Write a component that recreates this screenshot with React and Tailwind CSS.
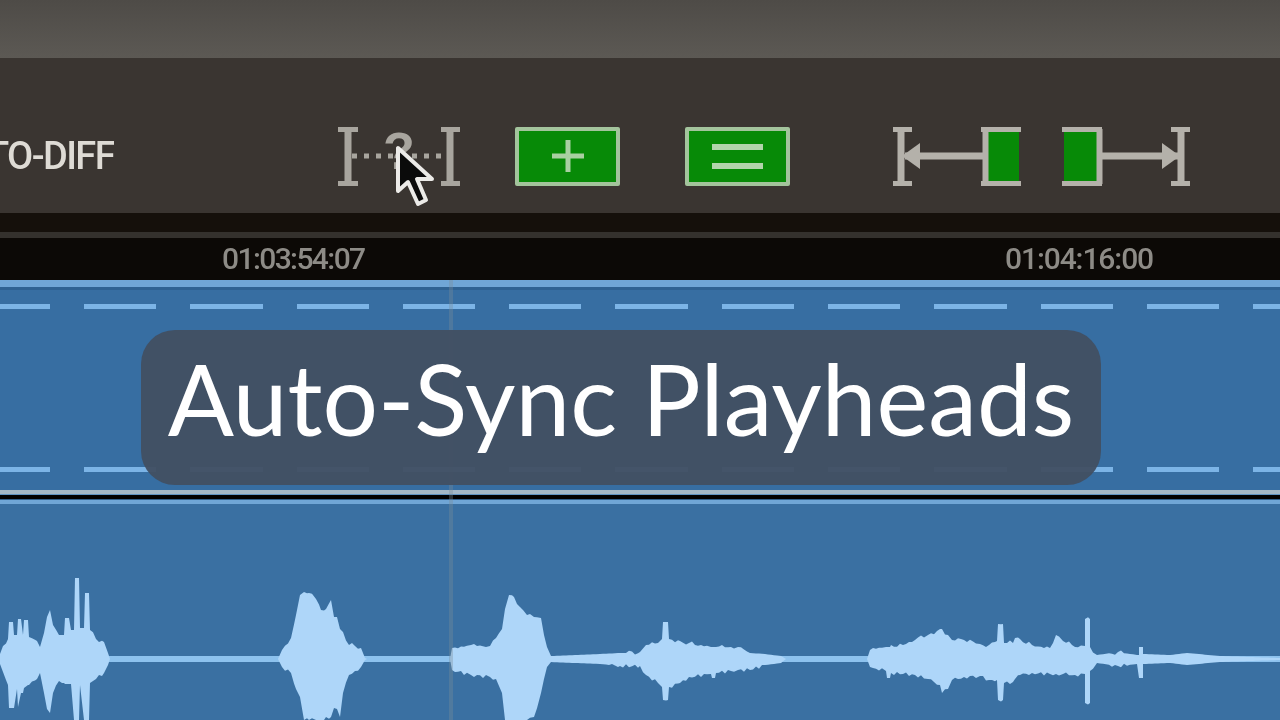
import React from 'react';

// [x, height above centre, height below centre]
const wave = [
  [0, 5, 5], [3, 13, 13], [8, 20, 26], [9, 37, 49], [13, 37, 49], [14, 24, 49], [17, 24, 30], [18, 40, 48], [21, 40, 34], [23, 24, 34],
  [24, 39, 29], [28, 39, 26], [29, 22, 26], [37, 18, 20], [40, 12, 14], [44, 26, 34], [47, 42, 50], [50, 49, 54], [53, 34, 34], [59, 24, 22],
  [64, 24, 24], [65, 41, 25], [69, 41, 25], [71, 29, 25], [74, 29, 61], [75, 81, 61], [79, 81, 61], [80, 31, 26], [84, 31, 61], [85, 66, 61],
  [89, 66, 61], [90, 29, 24], [96, 20, 20], [104, 17, 14], [108, 6, 6], [110, 0, 0],
  [278, 0, 0], [282, 9, 8], [291, 21, 14], [296, 44, 30], [300, 64, 38], [304, 67, 61], [309, 66, 61], [316, 60, 61], [321, 49, 61], [326, 50, 58], [331, 59, 58],
  [334, 42, 49], [337, 42, 50], [340, 30, 58], [343, 27, 34], [349, 14, 16], [355, 13, 12], [361, 11, 8], [365, 1, 1], [367, 0, 0],
  [450, 0, 0], [452, 11, 11], [471, 14, 16], [490, 13, 18], [496, 21, 20], [502, 30, 34], [505, 50, 61], [509, 64, 61], [514, 62, 61], [520, 52, 61],
  [527, 44, 61], [534, 42, 58], [541, 41, 34], [544, 24, 20], [547, 12, 8], [551, 3, 3], [575, 4, 4], [600, 5, 5], [620, 6, 7], [640, 7, 7],
  [646, 14, 16], [658, 16, 24], [662, 20, 28], [663, 37, 41], [668, 37, 41], [669, 20, 28], [680, 18, 24], [689, 16, 18], [711, 12, 15], [712, 12, 19],
  [715, 12, 19], [716, 12, 14], [738, 12, 11], [750, 6, 11], [765, 5, 6], [781, 3, 4], [786, 0, 0],
  [867, 0, 0], [870, 9, 8], [873, 11, 9], [886, 12, 12], [887, 12, 19], [890, 12, 19], [891, 14, 14], [903, 14, 15], [915, 19, 16], [928, 24, 20], [940, 30, 26],
  [942, 30, 34], [948, 24, 30], [952, 19, 21], [964, 19, 18], [980, 15, 17], [989, 14, 21], [997, 18, 21], [998, 35, 41], [1003, 35, 41], [1004, 16, 24],
  [1013, 16, 23], [1015, 21, 20], [1020, 20, 16], [1032, 14, 14], [1050, 11, 15], [1056, 24, 15], [1063, 18, 15], [1075, 12, 16], [1085, 13, 15],
  [1085, 40, 44], [1090, 40, 44], [1090, 12, 12], [1097, 4, 4], [1118, 7, 7], [1137, 4, 5], [1139, 4, 19], [1139, 12, 19], [1143, 12, 19], [1143, 5, 5], [1170, 4, 4],
  [1187, 6, 6], [1220, 3, 3], [1250, 2, 2], [1280, 1, 1],
];

// fill in the long slopes and rough them up a bit so the edge isn't so clean
const rough = [];
wave.forEach(([x, up, down], i) => {
  rough.push([x, up, down]);
  const next = wave[i + 1];
  if (!next) return;
  for (let sx = x + 3; sx < next[0] - 1; sx += 3) {
    const t = (sx - x) / (next[0] - x);
    const u = up + (next[1] - up) * t;
    const d = down + (next[2] - down) * t;
    const n = Math.sin(sx * 1.7) + Math.sin(sx * 0.63);
    rough.push([sx, u > 6 ? u + n * 1.3 : u, d > 6 ? d + Math.cos(sx * 1.3) * 1.8 : d]);
  }
});

const wavePoints = [
  ...rough.map(([x, up]) => `${x},${659 - up}`),
  ...[...rough].reverse().map(([x, , down]) => `${x},${659 + down}`),
].join(' ');

function Waveform() {
  return (
    <svg viewBox="0 504 1280 216" className="block h-[216px] w-full blur-[0.6px]">
      <rect x="0" y="656" width="1280" height="6" fill="#8dc2ee" />
      <polygon points={wavePoints} fill="#aed6f9" />
    </svg>
  );
}

function DashedLine() {
  return (
    <div className="h-[5px] w-full bg-[repeating-linear-gradient(90deg,#7cb4e6_0_50px,transparent_50px_84px,#7cb4e6_84px_106.3px)] blur-[0.5px]" />
  );
}

function GapIcon() {
  return (
    <div className="relative h-[59px] w-[122px]">
      <svg viewBox="0 0 122 59" className="block h-full w-full">
        <g stroke="#a8a59e" fill="none">
          <path d="M0 2.5h20M0 56.5h20M103 2.5h19M103 56.5h19" strokeWidth="5" />
          <path d="M10 2v55M112 2v55" strokeWidth="7" />
          <path d="M14 29h95" strokeWidth="5" strokeDasharray="5 7" />
        </g>
        <text x="61" y="42" textAnchor="middle" fontSize="52" fontWeight="700" fill="#a8a59e" fontFamily="'Liberation Sans', sans-serif">?</text>
      </svg>
      <svg viewBox="0 0 50 70" className="absolute left-[50px] top-[13px] h-[70px] w-[50px]">
        <path d="M10 8 L10 51 L20 42 L30 64 L38 60 L29 39 L44 39 Z" fill="#0b0b0b" stroke="#ecebe8" strokeWidth="4" strokeLinejoin="round" />
      </svg>
    </div>
  );
}

function GreenButton({ children }) {
  return (
    <div className="flex h-[59px] w-[105px] items-center justify-center rounded-[2px] border-[4px] border-[#a3c49c] bg-[#078a07]">
      {children}
    </div>
  );
}

function TrimLeft() {
  return (
    <svg viewBox="0 0 128 59" className="block h-[59px] w-[128px]">
      <g stroke="#b4b1aa" fill="none">
        <path d="M0 2.5h19M0 56.5h19" strokeWidth="5" />
        <path d="M8 2v55" strokeWidth="7" />
        <path d="M12 29h78" strokeWidth="7" />
      </g>
      <path d="M9 29l18 -13v26z" fill="#b4b1aa" />
      <rect x="90" y="3" width="36" height="53" fill="#078a07" />
      <path d="M88 2.5h40M88 56.5h40" stroke="#b4b1aa" strokeWidth="5" fill="none" />
      <path d="M92.5 2v55" stroke="#b4b1aa" strokeWidth="6" fill="none" />
    </svg>
  );
}

function TrimRight() {
  return (
    <svg viewBox="0 0 128 59" className="block h-[59px] w-[128px]">
      <rect x="2" y="3" width="36" height="53" fill="#078a07" />
      <path d="M0 2.5h40M0 56.5h40" stroke="#b4b1aa" strokeWidth="5" fill="none" />
      <path d="M37.5 2v55" stroke="#b4b1aa" strokeWidth="6" fill="none" />
      <g stroke="#b4b1aa" fill="none">
        <path d="M109 2.5h19M109 56.5h19" strokeWidth="5" />
        <path d="M119 2v55" strokeWidth="7" />
        <path d="M38 29h78" strokeWidth="7" />
      </g>
      <path d="M118 29l-18 -13v26z" fill="#b4b1aa" />
    </svg>
  );
}

export default function App() {
  return (
    <div className="relative flex h-[720px] w-[1280px] flex-col overflow-hidden bg-[#3a70a2] font-['Roboto',sans-serif]">
      <div className="h-[58px] bg-gradient-to-b from-[#4e4b47] to-[#5c5954]" />

      <div className="flex h-[155px] items-center bg-[#3a3531] pt-[41px] blur-[0.7px]">
        <div className="flex w-[114px] justify-end overflow-hidden">
          <span className="whitespace-nowrap text-[38px] font-medium leading-none tracking-[-1.6px] text-[#dedbd5]">TO-DIFF</span>
        </div>
        <div className="ml-[224px]"><GapIcon /></div>
        <div className="ml-[55px] w-[106px]">
          <GreenButton>
            <svg viewBox="0 0 32 32" className="h-[32px] w-[32px]">
              <path d="M16 0v32M0 16h32" stroke="#a9cfa2" strokeWidth="5" />
            </svg>
          </GreenButton>
        </div>
        <div className="ml-[64px]">
          <GreenButton>
            <div className="flex flex-col gap-[13px]">
              <div className="h-[6px] w-[51px] bg-[#b2d4ac]" />
              <div className="h-[6px] w-[51px] bg-[#b2d4ac]" />
            </div>
          </GreenButton>
        </div>
        <div className="ml-[103px]"><TrimLeft /></div>
        <div className="ml-[41px]"><TrimRight /></div>
      </div>

      <div className="h-[19px] bg-[#15100b]" />
      <div className="h-[6px] bg-[#34312d]" />

      <div className="flex h-[42px] items-center bg-[#0c0906] pl-[222px] blur-[0.6px]">
        <span className="w-[143px] whitespace-nowrap text-[30px] font-medium leading-none tracking-[-1.6px] text-[#8d8b86]">01:03:54:07</span>
        <span className="ml-[640px] w-[148px] whitespace-nowrap text-[30px] font-medium leading-none tracking-[-1.1px] text-[#8d8b86]">01:04:16:00</span>
      </div>

      <div className="h-[7px] bg-[#70a6d6]" />
      <div className="h-[3px] bg-[#2f6292]" />

      <div className="flex h-[200px] flex-col gap-[158px] bg-[#376ea2] pt-[14px]">
        <DashedLine />
        <DashedLine />
      </div>

      <div className="h-[4px] bg-[#a3b7c6]" />
      <div className="h-[1px] bg-[#5f93c2]" />
      <div className="h-[4px] bg-black" />
      <div className="h-[1px] bg-[#2f5f8c]" />
      <div className="h-[4px] bg-[#70a6d6]" />

      <Waveform />

      {/* playhead */}
      <div className="absolute bottom-0 left-[449px] top-[280px] w-[4px] bg-[#7b8b99]/35" />

      {/* caption */}
      <div className="absolute left-[141px] top-[330px] flex h-[155px] w-[960px] items-center justify-center rounded-[34px] bg-[#414f62]/95 pb-[20px]">
        <span className="whitespace-nowrap font-['Lato',sans-serif] text-[98px] leading-none text-white">Auto-Sync Playheads</span>
      </div>
    </div>
  );
}
